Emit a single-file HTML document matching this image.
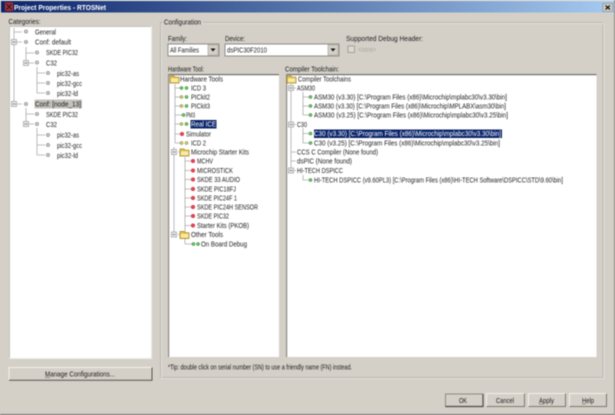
<!DOCTYPE html>
<html><head><meta charset="utf-8"><title>Project Properties - RTOSNet</title>
<style>
html,body{margin:0;padding:0;width:615px;height:415px;overflow:hidden;background:#d4d0c8}
svg{display:block;filter:blur(.55px)}
text{font-family:"Liberation Sans",sans-serif;font-size:7.2px;fill:#1c1c1c;dominant-baseline:auto}
.l{stroke:#aaa;stroke-width:.8;fill:none}
.g{fill:#a9d29a;stroke:#3f9a3f;stroke-width:.9}
.y{fill:#e8e6b0;stroke:#9a9a40;stroke-width:.9}
.r{fill:#e8485a;stroke:#d03040;stroke-width:.6}
.d{fill:#d8d8d8;stroke:#8a8a8a;stroke-width:.8}
</style></head><body>
<svg width="615" height="415" viewBox="0 0 615 415" xmlns="http://www.w3.org/2000/svg">
<defs>
<linearGradient id="tb" x1="0" x2="1" y1="0" y2="0"><stop offset="0" stop-color="#0a246a"/><stop offset="1" stop-color="#a6caf0"/></linearGradient>
<g id="fo"><path d="M0 1.500h4l1 1.200h4v5.800h-9z" fill="#e8c040" stroke="#98802c" stroke-width=".7"/><rect x=".8" y="3.800" width="7.600" height="4" fill="#fbe9a0"/></g>
<g id="ex"><rect x="-2.500" y="-2.500" width="5" height="5" fill="#eee" stroke="#999" stroke-width=".7"/><path d="M-1.500 0h3" stroke="#555" stroke-width=".7"/></g>
<g id="ar"><path d="M-2.500 -1h5l-2.500 3z" fill="#111"/></g>
</defs>
<rect width="615" height="415" fill="#d4d0c8"/>
<rect x="0" y="0" width="615" height="1" fill="#e8e6e0"/>
<rect x="0" y="414" width="615" height="1" fill="#6e6e6a"/>
<rect x="614" y="0" width="1" height="415" fill="#8a8882"/>
<rect x="1" y="1" width="613" height="11.500" fill="url(#tb)"/>
<rect x="5" y="2.500" width="8" height="8.500" fill="#b52a30"/>
<path d="M6.500 4l5 5.500M11.500 4l-5 5.500" stroke="#222" stroke-width="1.300"/>
<text x="14" y="10" textLength="92" lengthAdjust="spacingAndGlyphs" style="fill:#fff;font-weight:bold;font-size:7.600px">Project Properties - RTOSNet</text>
<rect x="603" y="3.500" width="9.500" height="8" fill="#d4d0c8" stroke="#777" stroke-width=".5"/>
<path d="M605.500 5.500l4.500 4M610 5.500l-4.500 4" stroke="#111" stroke-width="1.200"/>

<!-- left panel -->
<text x="8.500" y="24" textLength="32" lengthAdjust="spacingAndGlyphs">Categories:</text>
<rect x="9" y="26" width="142.500" height="332.500" fill="#fff"/>
<rect x="9" y="26" width="142.500" height="1" fill="#c4c2bc"/>
<rect x="9" y="26" width="1" height="332" fill="#c4c2bc"/>
<rect x="151" y="26" width="1" height="333" fill="#ecebe6"/>
<rect x="9" y="358" width="143" height="1" fill="#ecebe6"/>
<path class="l" d="M14 28v74M14 32h8M14 42h8M26 47v16M26 53h8M26 63h8M37 67v26M37 73h8M37 83h8M37 93h8M14 104h8M26 108v16M26 114h8M26 124h8M37 128v27M37 135h8M37 145h8M37 155h8"/>
<use href="#ex" x="14" y="42"/><use href="#ex" x="26" y="63"/><use href="#ex" x="14" y="104"/><use href="#ex" x="26" y="124"/>
<g class="d"><circle cx="26" cy="31.500" r="1.500"/><circle cx="26" cy="42" r="1.500"/><circle cx="37" cy="52.500" r="1.500"/><circle cx="37" cy="62.500" r="1.500"/><circle cx="48" cy="73" r="1.500"/><circle cx="48" cy="83" r="1.500"/><circle cx="48" cy="93" r="1.500"/><circle cx="26" cy="104" r="1.500"/><circle cx="37" cy="114" r="1.500"/><circle cx="37" cy="124" r="1.500"/><circle cx="48" cy="135" r="1.500"/><circle cx="48" cy="145" r="1.500"/><circle cx="48" cy="155" r="1.500"/></g>
<rect x="34.500" y="99.500" width="47.500" height="9" fill="#c4c2bc"/>
<text x="35" y="34.500" textLength="21" lengthAdjust="spacingAndGlyphs">General</text>
<text x="35" y="44.500" textLength="36" lengthAdjust="spacingAndGlyphs">Conf: default</text>
<text x="46" y="55" textLength="32" lengthAdjust="spacingAndGlyphs">SKDE PIC32</text>
<text x="46" y="65.500" textLength="11" lengthAdjust="spacingAndGlyphs">C32</text>
<text x="57" y="76" textLength="22" lengthAdjust="spacingAndGlyphs">pic32-as</text>
<text x="57" y="86" textLength="25" lengthAdjust="spacingAndGlyphs">pic32-gcc</text>
<text x="57" y="96" textLength="21" lengthAdjust="spacingAndGlyphs">pic32-ld</text>
<text x="35" y="106.500" textLength="46" lengthAdjust="spacingAndGlyphs">Conf: [node_13]</text>
<text x="46" y="117" textLength="32" lengthAdjust="spacingAndGlyphs">SKDE PIC32</text>
<text x="46" y="127" textLength="11" lengthAdjust="spacingAndGlyphs">C32</text>
<text x="57" y="137.500" textLength="22" lengthAdjust="spacingAndGlyphs">pic32-as</text>
<text x="57" y="148" textLength="25" lengthAdjust="spacingAndGlyphs">pic32-gcc</text>
<text x="57" y="158" textLength="21" lengthAdjust="spacingAndGlyphs">pic32-ld</text>

<!-- manage button -->
<rect x="9" y="367.500" width="143" height="13" fill="#d4d0c8"/>
<path d="M9 380.500V367.500H152" stroke="#f2f1ec" fill="none"/>
<path d="M9 380.200H152V367.500" stroke="#55534e" stroke-width="1" fill="none"/>
<text x="45" y="376.500" textLength="70" lengthAdjust="spacingAndGlyphs">Manage Configurations...</text>
<path d="M45 377.500h5" stroke="#333" stroke-width=".4"/>

<!-- group -->
<rect x="160.500" y="22.500" width="442.500" height="355" fill="none" stroke="#b0aea8" stroke-width=".7"/>
<rect x="161.500" y="23.500" width="442.500" height="355" fill="none" stroke="#ecebe6" stroke-width=".6"/>
<rect x="163" y="18" width="40" height="8" fill="#d4d0c8"/>
<text x="164" y="24.500" textLength="37" lengthAdjust="spacingAndGlyphs">Configuration</text>

<text x="168" y="41" textLength="19" lengthAdjust="spacingAndGlyphs">Family:</text>
<rect x="168" y="44" width="51" height="12" fill="#fff" stroke="#77756f" stroke-width=".8"/>
<text x="170" y="52.500" textLength="29" lengthAdjust="spacingAndGlyphs">All Families</text>
<rect x="208" y="45" width="10" height="10" fill="#d4d0c8" stroke="#8c8a84" stroke-width=".5"/>
<use href="#ar" x="213" y="49.500"/>
<text x="225" y="41" textLength="20" lengthAdjust="spacingAndGlyphs">Device:</text>
<rect x="225" y="44" width="114" height="12" fill="#fff" stroke="#77756f" stroke-width=".8"/>
<text x="227" y="52.500" textLength="40" lengthAdjust="spacingAndGlyphs">dsPIC30F2010</text>
<rect x="328" y="45" width="10" height="10" fill="#d4d0c8" stroke="#8c8a84" stroke-width=".5"/>
<use href="#ar" x="333" y="49.500"/>
<text x="346" y="41" textLength="77" lengthAdjust="spacingAndGlyphs">Supported Debug Header:</text>
<rect x="348" y="46" width="6.500" height="6.500" fill="#dcdad4" stroke="#8c8a84" stroke-width=".7"/>
<text x="358" y="52" textLength="18" lengthAdjust="spacingAndGlyphs" style="fill:#a8a6a0">&lt;none&gt;</text>

<!-- hardware -->
<text x="168" y="71.500" textLength="36" lengthAdjust="spacingAndGlyphs">Hardware Tool:</text>
<rect x="168" y="74" width="111" height="283" fill="#fff"/>
<rect x="168" y="74" width="111" height="1.200" fill="#6e6c67"/>
<rect x="168" y="74" width="1.200" height="283" fill="#8c8a84"/>
<path class="l" d="M175 84v59M175 88h5M175 97h5M175 106h8M175 115h8M175 124h5M175 134h8M175 143h5M174 147v85M178 152h2M185 157v87M185 161h7M185 170.500h7M185 179.500h7M185 189h7M185 198h7M185 207h7M185 216h7M185 225.500h7M178 234.500h2M185 239v5M185 244h7"/>
<use href="#fo" x="170" y="74.500"/>
<use href="#fo" x="180" y="147.500"/><use href="#fo" x="180" y="230"/>
<use href="#ex" x="174" y="152"/><use href="#ex" x="174" y="234.500"/>
<g class="g"><circle cx="181.500" cy="88" r="1.300"/><circle cx="186.500" cy="88" r="1.300"/><circle cx="186.500" cy="97" r="1.300"/><circle cx="186.500" cy="106" r="1.300"/><circle cx="183.500" cy="115" r="1.300"/><circle cx="186.500" cy="124" r="1.300"/><circle cx="198" cy="244" r="1.300"/></g>
<g class="y"><circle cx="181.500" cy="97" r="1.300"/><circle cx="181.500" cy="106" r="1.300"/><circle cx="181.500" cy="124" r="1.300"/><circle cx="181.500" cy="143" r="1.300"/><circle cx="186.500" cy="143" r="1.300"/></g>
<circle class="g" cx="193.500" cy="244" r="1.300"/>
<g class="r"><circle cx="182" cy="134" r="1.700"/><circle cx="193" cy="161" r="1.700"/><circle cx="193" cy="170.500" r="1.700"/><circle cx="193" cy="179.500" r="1.700"/><circle cx="193" cy="189" r="1.700"/><circle cx="193" cy="198" r="1.700"/><circle cx="193" cy="207" r="1.700"/><circle cx="193" cy="216" r="1.700"/><circle cx="193" cy="225.500" r="1.700"/></g>
<rect x="190.500" y="120" width="26" height="8.500" fill="#0a246a"/>
<text x="180" y="81.500" textLength="43" lengthAdjust="spacingAndGlyphs">Hardware Tools</text>
<text x="191" y="90.500" textLength="15" lengthAdjust="spacingAndGlyphs">ICD 3</text>
<text x="191" y="99.500" textLength="19" lengthAdjust="spacingAndGlyphs">PICkit2</text>
<text x="191" y="108.500" textLength="19" lengthAdjust="spacingAndGlyphs">PICkit3</text>
<text x="186" y="117.500" textLength="9" lengthAdjust="spacingAndGlyphs">PM3</text>
<text x="191" y="126.500" textLength="25" lengthAdjust="spacingAndGlyphs" style="fill:#fff">Real ICE</text>
<text x="186" y="136.500" textLength="25" lengthAdjust="spacingAndGlyphs">Simulator</text>
<text x="191" y="145.500" textLength="15" lengthAdjust="spacingAndGlyphs">ICD 2</text>
<text x="191" y="154.500" textLength="58" lengthAdjust="spacingAndGlyphs">Microchip Starter Kits</text>
<text x="197" y="163.500" textLength="16" lengthAdjust="spacingAndGlyphs">MCHV</text>
<text x="197" y="173" textLength="36" lengthAdjust="spacingAndGlyphs">MICROSTICK</text>
<text x="197" y="182" textLength="43" lengthAdjust="spacingAndGlyphs">SKDE 33 AUDIO</text>
<text x="197" y="191.500" textLength="39" lengthAdjust="spacingAndGlyphs">SKDE PIC18FJ</text>
<text x="197" y="200.500" textLength="40" lengthAdjust="spacingAndGlyphs">SKDE PIC24F 1</text>
<text x="197" y="209.500" textLength="61" lengthAdjust="spacingAndGlyphs">SKDE PIC24H SENSOR</text>
<text x="197" y="218.500" textLength="32" lengthAdjust="spacingAndGlyphs">SKDE PIC32</text>
<text x="197" y="228" textLength="52" lengthAdjust="spacingAndGlyphs">Starter Kits (PKOB)</text>
<text x="191" y="237" textLength="32" lengthAdjust="spacingAndGlyphs">Other Tools</text>
<text x="201" y="246.500" textLength="46" lengthAdjust="spacingAndGlyphs">On Board Debug</text>

<!-- compiler -->
<text x="285" y="71.500" textLength="54" lengthAdjust="spacingAndGlyphs">Compiler Toolchain:</text>
<rect x="286" y="74" width="310.500" height="283" fill="#fff"/>
<rect x="286" y="74" width="310.500" height="1.200" fill="#6e6c67"/>
<rect x="286" y="74" width="1.200" height="283" fill="#8c8a84"/>
<path class="l" d="M291 84v86M294 88h2M303 92v23M303 97h6M303 106h6M303 115h6M294 124.500h2M303 128v15M303 133.500h6M303 143h6M291 152h5M291 161h5M294 170.500h2M303 175v5M303 180h6"/>
<use href="#fo" x="287" y="74.500"/>
<use href="#ex" x="291" y="88"/><use href="#ex" x="291" y="124.500"/><use href="#ex" x="291" y="170.500"/>
<g class="g"><circle cx="310.500" cy="97" r="1.300"/><circle cx="310.500" cy="106" r="1.300"/><circle cx="310.500" cy="115" r="1.300"/><circle cx="310.500" cy="133.500" r="1.300"/><circle cx="310.500" cy="143" r="1.300"/><circle cx="310.500" cy="180" r="1.300"/></g>
<rect x="314" y="129.500" width="188" height="8.500" fill="#0a246a"/>
<text x="298" y="81.500" textLength="53" lengthAdjust="spacingAndGlyphs">Compiler Toolchains</text>
<text x="297" y="90.500" textLength="18" lengthAdjust="spacingAndGlyphs">ASM30</text>
<text x="314" y="99.500" textLength="193" lengthAdjust="spacingAndGlyphs">ASM30 (v3.30) [C:\Program Files (x86)\Microchip\mplabc30\v3.30\bin]</text>
<text x="314" y="108.500" textLength="192" lengthAdjust="spacingAndGlyphs">ASM30 (v3.30) [C:\Program Files (x86)\Microchip\MPLABX\asm30\bin]</text>
<text x="314" y="117.500" textLength="194" lengthAdjust="spacingAndGlyphs">ASM30 (v3.25) [C:\Program Files (x86)\Microchip\mplabc30\v3.25\bin]</text>
<text x="297" y="127" textLength="10" lengthAdjust="spacingAndGlyphs">C30</text>
<text x="314" y="136" textLength="187" lengthAdjust="spacingAndGlyphs" style="fill:#fff">C30 (v3.30) [C:\Program Files (x86)\Microchip\mplabc30\v3.30\bin]</text>
<text x="314" y="145.500" textLength="186" lengthAdjust="spacingAndGlyphs">C30 (v3.25) [C:\Program Files (x86)\Microchip\mplabc30\v3.25\bin]</text>
<text x="297" y="154.500" textLength="81" lengthAdjust="spacingAndGlyphs">CCS C Compiler (None found)</text>
<text x="297" y="163.500" textLength="55" lengthAdjust="spacingAndGlyphs">dsPIC (None found)</text>
<text x="297" y="173" textLength="46" lengthAdjust="spacingAndGlyphs">HI-TECH DSPICC</text>
<text x="314" y="182.500" textLength="249" lengthAdjust="spacingAndGlyphs">HI-TECH DSPICC (v9.60PL3) [C:\Program Files (x86)\HI-TECH Software\DSPICC\STD\9.60\bin]</text>

<text x="168" y="369.500" textLength="184" lengthAdjust="spacingAndGlyphs">*Tip: double click on serial number (SN) to use a friendly name (FN) instead.</text>

<!-- buttons -->
<path d="M445.500 407V394H483" stroke="#8c8a84" fill="none"/>
<path d="M445.500 406.500H483V394" stroke="#4a4a47" fill="none" stroke-width="1.200"/>
<text x="459" y="403" textLength="8" lengthAdjust="spacingAndGlyphs">OK</text>
<g fill="none" stroke-width="1">
<path d="M486.500 406.500V393.500H525" stroke="#f2f1ec"/><path d="M486.500 406.500H524.500V393.500" stroke="#7a7873"/>
<path d="M528.500 406.500V393.500H566" stroke="#f2f1ec"/><path d="M528.500 406.500H565.500V393.500" stroke="#7a7873"/>
<path d="M569.500 406.500V393.500H607" stroke="#f2f1ec"/><path d="M569.500 406.500H606.500V393.500" stroke="#7a7873"/>
</g>
<text x="496" y="403" textLength="18" lengthAdjust="spacingAndGlyphs">Cancel</text>
<text x="539" y="403" textLength="15" lengthAdjust="spacingAndGlyphs">Apply</text>
<path d="M539 404h4" stroke="#333" stroke-width=".4"/>
<text x="582" y="403" textLength="12" lengthAdjust="spacingAndGlyphs">Help</text>
<path d="M582 404h4" stroke="#333" stroke-width=".4"/>
</svg>
</body></html>
